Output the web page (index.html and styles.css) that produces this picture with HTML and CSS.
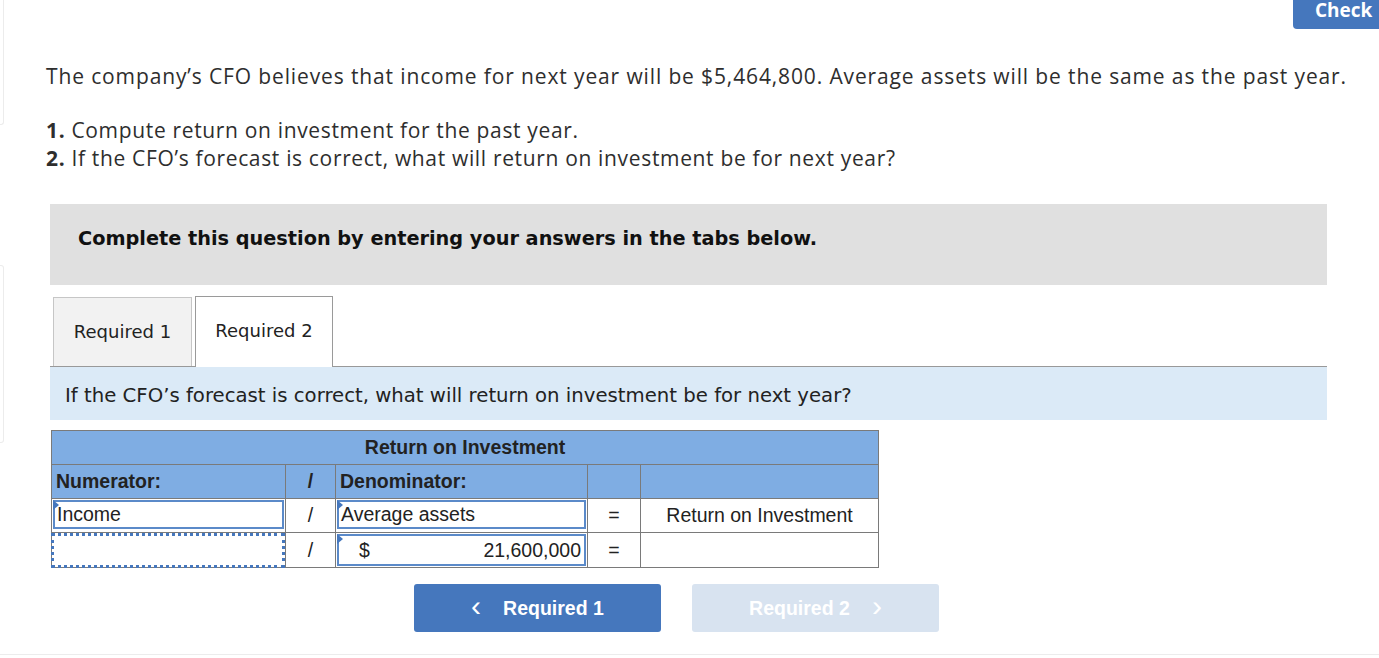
FILE: index.html
```html
<!DOCTYPE html>
<html>
<head>
<meta charset="utf-8">
<link rel="stylesheet" href="styles.css">
</head>
<body>
<div class="rail">
  <div class="rail-top"></div>
  <div class="rail-mid"></div>
</div>
<div class="topbar">
  <button class="check">Check</button>
</div>
<div class="content">
  <p class="intro">The company’s CFO believes that income for next year will be $5,464,800. Average assets will be the same as the past year.</p>
  <ol class="reqs">
    <li><b>1.</b> Compute return on investment for the past year.</li>
    <li><b>2.</b> If the CFO’s forecast is correct, what will return on investment be for next year?</li>
  </ol>
</div>
<div class="panel">
  <div class="instr">Complete this question by entering your answers in the tabs below.</div>
  <div class="tabs">
    <div class="tab tab-off">Required 1</div>
    <div class="tab tab-on">Required 2</div>
  </div>
  <div class="qbar">If the CFO’s forecast is correct, what will return on investment be for next year?</div>
  <table class="roi">
    <colgroup>
      <col class="c-num"><col class="c-op"><col class="c-den"><col class="c-eq"><col class="c-res">
    </colgroup>
    <tr class="hd"><th colspan="5" class="title">Return on Investment</th></tr>
    <tr class="hd">
      <th class="left">Numerator:</th>
      <th>/</th>
      <th class="left">Denominator:</th>
      <th></th>
      <th></th>
    </tr>
    <tr>
      <td class="inp"><div class="box">Income</div></td>
      <td class="op">/</td>
      <td class="inp"><div class="box">Average assets</div></td>
      <td class="op">=</td>
      <td class="res">Return on Investment</td>
    </tr>
    <tr>
      <td class="inp"><div class="box dotted"></div></td>
      <td class="op">/</td>
      <td class="inp"><div class="box money"><span>$</span><span>21,600,000</span></div></td>
      <td class="op">=</td>
      <td class="res"></td>
    </tr>
  </table>
  <div class="nav">
    <button class="navbtn prev"><span class="chev">&#x2039;</span>Required 1</button>
    <button class="navbtn next">Required 2<span class="chev">&#x203A;</span></button>
  </div>
</div>
<div class="bottomline"></div>
</body>
</html>
```
FILE: styles.css
```css
html, body {
  margin: 0;
  padding: 0;
  background: #fff;
  overflow: hidden;
}
body {
  width: 1379px;
  height: 658px;
  position: relative;
  font-family: "Open Sans", "Liberation Sans", sans-serif;
  color: #2b2b2b;
}
.rail {
  position: absolute;
  left: 0;
  top: 0;
  width: 4px;
}
.rail-top {
  height: 124px;
  border-right: 1px solid #ececec;
  border-bottom: 1px solid #ececec;
  border-bottom-right-radius: 3px;
}
.rail-mid {
  margin-top: 140px;
  height: 176px;
  border-right: 1px solid #ececec;
  border-top: 1px solid #ececec;
  border-bottom: 1px solid #ececec;
  border-radius: 0 3px 3px 0;
}
.topbar {
  display: flex;
  justify-content: flex-end;
  height: 29px;
}
.check {
  width: 86px;
  height: 29px;
  border: none;
  background: #4577bd;
  color: #fff;
  font-family: "Open Sans", "Liberation Sans", sans-serif;
  font-weight: 700;
  font-size: 19px;
  line-height: 18px;
  border-radius: 0 0 0 4px;
  padding: 0 0 10px 22px;
  text-align: left;
  white-space: nowrap;
}
.content {
  padding-left: 46px;
  font-size: 21px;
  letter-spacing: 0.87px;
  line-height: 28px;
  color: #2e2e2e;
}
.intro {
  margin: 33px 0 0 0;
}
.reqs {
  list-style: none;
  margin: 26px 0 0 0;
  padding: 0;
  letter-spacing: 0.66px;
}
.reqs b {
  font-weight: 700;
}
.panel {
  margin: 32px 0 0 50px;
  width: 1277px;
}
.instr {
  height: 81px;
  box-sizing: border-box;
  background: #e0e0e0;
  display: flex;
  align-items: center;
  padding-left: 28px;
  padding-bottom: 12px;
  font-family: "DejaVu Sans", Verdana, sans-serif;
  font-weight: 700;
  font-size: 19.3px;
  color: #111;
}
.tabs {
  display: flex;
  gap: 3px;
  margin-top: 11px;
  padding-left: 3px;
  border-bottom: 1px solid #999;
  height: 70px;
  align-items: flex-end;
}
.tab {
  height: 69px;
  box-sizing: border-box;
  display: flex;
  align-items: center;
  justify-content: center;
  font-family: "DejaVu Sans", Verdana, sans-serif;
  font-size: 18px;
  color: #222;
}
.tab-off {
  width: 139px;
  background: #f2f2f2;
  border: 1px solid #c6c6c6;
  border-bottom: none;
  padding-bottom: 2px;
}
.tab-on {
  width: 138px;
  height: 71px;
  background: #fff;
  border: 1px solid #9a9a9a;
  border-bottom: none;
  margin-bottom: -1px;
  padding-bottom: 3px;
}
.qbar {
  height: 53px;
  box-sizing: border-box;
  background: #dbeaf7;
  display: flex;
  align-items: center;
  padding-left: 15px;
  padding-top: 3px;
  font-family: "DejaVu Sans", Verdana, sans-serif;
  font-size: 19.7px;
  color: #222;
}
.roi {
  margin-top: 10px;
  margin-left: 1px;
  border-collapse: collapse;
  font-family: "Liberation Sans", Arial, sans-serif;
  font-size: 19.5px;
  color: #222;
  table-layout: fixed;
  width: 827px;
}
.c-num { width: 234px; }
.c-op { width: 50px; }
.c-den { width: 252px; }
.c-eq { width: 53px; }
.c-res { width: 238px; }
.roi th, .roi td {
  border: 1px solid #7a7a7a;
  padding: 0;
  height: 33px;
}
.roi tr.hd th {
  background: #7fade3;
  font-weight: 700;
  text-align: center;
}
.roi tr.hd th.left {
  text-align: left;
  padding-left: 4px;
}
.roi td.op {
  text-align: center;
}
.roi td.res {
  text-align: center;
}
.roi td.inp {
  padding: 0;
  vertical-align: top;
}
.box {
  position: relative;
  height: 29px;
  margin: 1px 1px 0 1px;
  border: 2px solid #5b8ac9;
  box-sizing: border-box;
  line-height: 25px;
  padding-left: 2px;
  text-align: left;
}
.box::before {
  content: "";
  position: absolute;
  left: -2px;
  top: -2px;
  border-top: 5px solid transparent;
  border-bottom: 5px solid transparent;
  border-left: 6px solid #4577bd;
}
.box.dotted {
  border: 3px dotted #4577bd;
  height: 35px;
  margin: 0 0 -1px -1px;
}
.box.dotted::before {
  display: none;
}
.box.money {
  display: flex;
  justify-content: space-between;
  padding: 0 3px 0 20px;
  height: 32px;
  line-height: 28px;
}
.nav {
  display: flex;
  gap: 31px;
  margin-top: 16px;
  padding-left: 364px;
}
.navbtn {
  width: 247px;
  height: 48px;
  border: none;
  border-radius: 3px;
  font-family: "Liberation Sans", Arial, sans-serif;
  font-weight: 700;
  font-size: 19.5px;
  color: #fff;
  display: flex;
  align-items: center;
  justify-content: center;
}
.prev {
  background: #4577bd;
}
.next {
  background: #d8e3f0;
}
.chev {
  font-size: 30px;
  font-weight: 400;
  line-height: 1;
  margin-top: -5px;
}
.prev .chev { margin-right: 22px; }
.next .chev { margin-left: 22px; }
.bottomline {
  position: absolute;
  left: 0;
  right: 0;
  top: 654px;
  height: 1px;
  background: #ececec;
}
```
